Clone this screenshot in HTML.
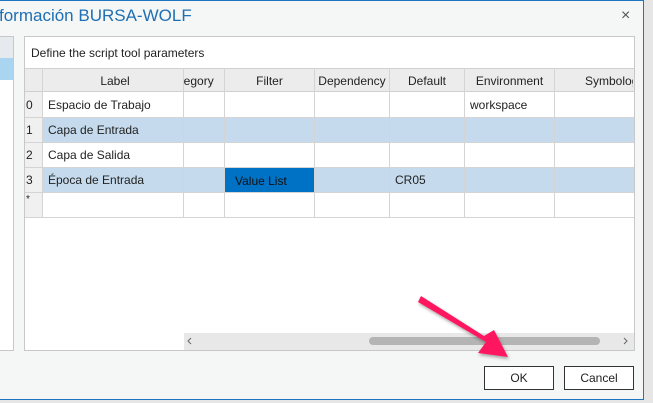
<!DOCTYPE html>
<html><head><meta charset="utf-8"><style>
*{margin:0;padding:0;box-sizing:border-box}
body{width:653px;height:403px;background:#e6e6e6;font-family:"Segoe UI","Liberation Sans",sans-serif;position:relative;overflow:hidden}
.dlg{position:absolute;left:0;top:0;width:644px;height:400px;background:#f5f6f6;border-top:1px solid #1f74c0;border-right:1px solid #1f74c0;border-bottom:1px solid #1f74c0}
.abs{position:absolute}
.t{font-size:12px;color:#222;white-space:nowrap}
</style></head><body>
<div class="dlg"></div>
<div class="abs" style="left:-1px;top:6px;font-size:17px;color:#1e6fb3">formación BURSA-WOLF</div>
<div class="abs" style="left:621px;top:7px;font-size:16px;color:#555">×</div>
<div class="abs" style="left:0;top:36px;width:14px;height:315px;background:#fff;border:1px solid #c8c8c8;border-left:none"></div>
<div class="abs" style="left:0;top:37px;width:13px;height:21px;background:#e5eaef"></div>
<div class="abs" style="left:0;top:58px;width:13px;height:22px;background:#a9d5f1"></div>
<div class="abs" style="left:24px;top:36px;width:611px;height:315px;background:#fff;border:1px solid #c8c8c8"></div>
<div class="abs t" style="left:31px;top:46px">Define the script tool parameters</div>
<div class="abs" style="left:25px;top:68px;width:609px;height:24px;background:#ececec;border-top:1px solid #d0d0d0;border-bottom:1px solid #d0d0d0"></div>
<div class="abs" style="left:42px;top:117px;width:592px;height:25px;background:#c5dbed"></div>
<div class="abs" style="left:42px;top:167px;width:592px;height:25px;background:#c5dbed"></div>
<div class="abs" style="left:25px;top:92px;width:17px;height:125px;background:#f0f0f0"></div>
<div class="abs" style="left:225px;top:168px;width:89px;height:24px;background:#0072c6"></div>
<svg class="abs" style="left:0;top:0" width="653" height="403">
<g stroke="#d4d4d4" stroke-width="1">
<line x1="25" y1="117.5" x2="634" y2="117.5"/><line x1="25" y1="142.5" x2="634" y2="142.5"/><line x1="25" y1="167.5" x2="634" y2="167.5"/><line x1="25" y1="192.5" x2="634" y2="192.5"/><line x1="25" y1="217.5" x2="634" y2="217.5"/>
<line x1="42.5" y1="68" x2="42.5" y2="217"/><line x1="183.5" y1="68" x2="183.5" y2="217"/><line x1="224.5" y1="68" x2="224.5" y2="217"/><line x1="314.5" y1="68" x2="314.5" y2="217"/><line x1="389.5" y1="68" x2="389.5" y2="217"/><line x1="464.5" y1="68" x2="464.5" y2="217"/><line x1="554.5" y1="68" x2="554.5" y2="217"/>
</g>
<rect x="184" y="333" width="450" height="17" fill="#e8e8e8"/>
<rect x="369" y="337" width="231" height="8" rx="4" fill="#b4b4b4"/>
<path d="M191 338 l-3 3 l3 3 M624 338 l3 3 l-3 3" stroke="#666" fill="none"/>
</svg>
<div class="abs t" style="left:70px;top:74px;width:90px;text-align:center">Label</div>
<div class="abs t" style="left:184px;top:74px;width:40px;overflow:hidden"><span style="margin-left:-19px">Category</span></div>
<div class="abs t" style="left:225px;top:74px;width:89px;text-align:center">Filter</div>
<div class="abs t" style="left:315px;top:74px;width:74px;text-align:center">Dependency</div>
<div class="abs t" style="left:390px;top:74px;width:74px;text-align:center">Default</div>
<div class="abs t" style="left:465px;top:74px;width:89px;text-align:center">Environment</div>
<div class="abs t" style="left:585px;top:74px;width:48px;overflow:hidden">Symbology</div>
<div class="abs t" style="left:26px;top:98px">0</div>
<div class="abs t" style="left:26px;top:123px">1</div>
<div class="abs t" style="left:26px;top:148px">2</div>
<div class="abs t" style="left:26px;top:173px">3</div>
<div class="abs t" style="left:26px;top:194px;font-size:10px">*</div>
<div class="abs t" style="left:48px;top:98px">Espacio de Trabajo</div>
<div class="abs t" style="left:48px;top:123px">Capa de Entrada</div>
<div class="abs t" style="left:48px;top:148px">Capa de Salida</div>
<div class="abs t" style="left:48px;top:173px">Época de Entrada</div>
<div class="abs t" style="left:235px;top:174px;color:#111">Value List</div>
<div class="abs t" style="left:395px;top:173px">CR05</div>
<div class="abs t" style="left:470px;top:98px">workspace</div>
<div class="abs t" style="left:484px;top:366px;width:70px;height:24px;border:1px solid #333;background:#fff;text-align:center;line-height:22px">OK</div>
<div class="abs t" style="left:564px;top:366px;width:70px;height:24px;border:1px solid #333;background:#fff;text-align:center;line-height:22px">Cancel</div>
<svg class="abs" style="left:0;top:0" width="653" height="403">
<defs><filter id="s"><feDropShadow dx="1" dy="2" stdDeviation="1.5" flood-opacity="0.35"/></filter></defs>
<polygon filter="url(#s)" fill="#ff1860" points="418,302 421,296 484,336 494,330 508,357 478,353 486,342"/>
</svg>
</body></html>
